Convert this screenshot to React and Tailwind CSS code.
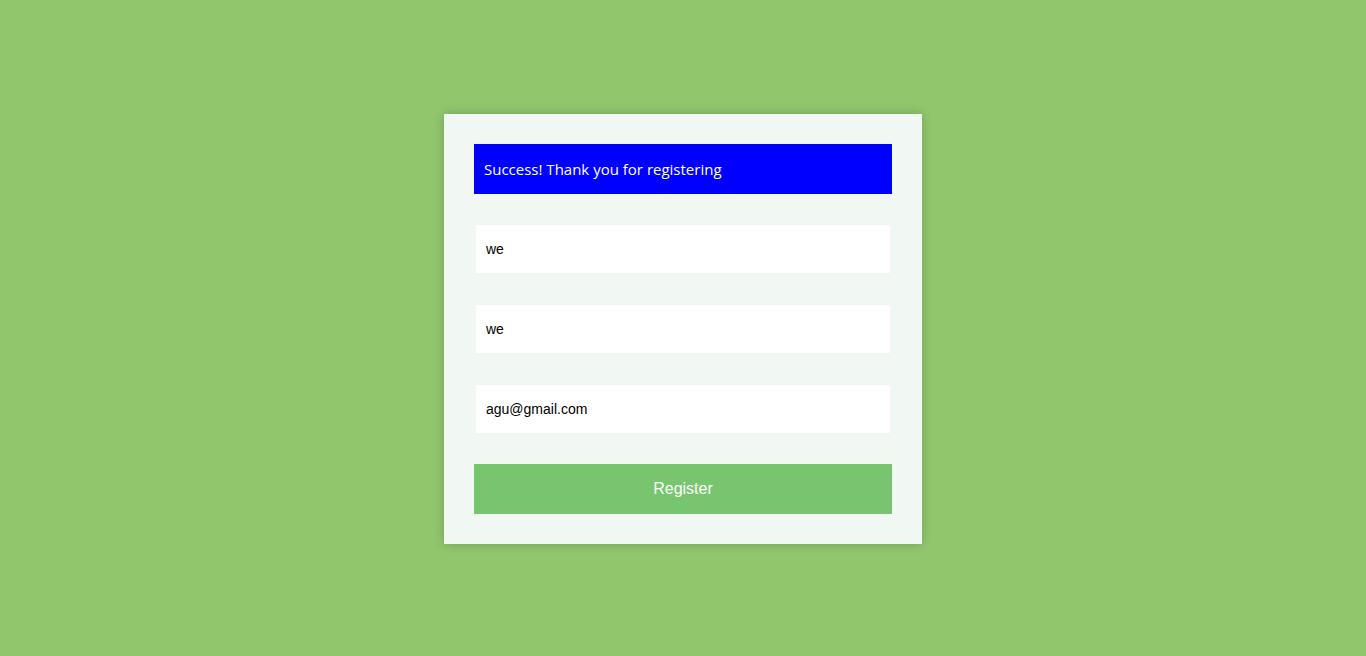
import React, { useState } from 'react';

const App = () => {
  const [firstName, setFirstName] = useState('we');
  const [lastName, setLastName] = useState('we');
  const [email, setEmail] = useState('agu@gmail.com');

  return (
    <div className="min-h-screen w-full bg-[#91c66d] flex items-center justify-center pt-[2px]">
      {/* Form card */}
      <div className="w-[478px] bg-[#f1f8f4] p-[30px] shadow-[0_0_10px_rgba(0,0,0,0.2)] flex flex-col gap-[30px]">
        {/* Success banner */}
        <div className="h-[50px] bg-[#0000ff] text-white flex items-center px-[10px] text-[15px] font-['Open_Sans',sans-serif]">
          Success! Thank you for registering
        </div>

        <input
          type="text"
          value={firstName}
          onChange={(e) => setFirstName(e.target.value)}
          className="h-[50px] mx-[1px] bg-white border border-[#f3f5f4] px-[10px] text-[14px] text-black font-['Liberation_Sans',Arial,sans-serif] outline-none"
        />
        <input
          type="text"
          value={lastName}
          onChange={(e) => setLastName(e.target.value)}
          className="h-[50px] mx-[1px] bg-white border border-[#f3f5f4] px-[10px] text-[14px] text-black font-['Liberation_Sans',Arial,sans-serif] outline-none"
        />
        <input
          type="email"
          value={email}
          onChange={(e) => setEmail(e.target.value)}
          className="h-[50px] mx-[1px] bg-white border border-[#f3f5f4] px-[10px] text-[14px] text-black font-['Liberation_Sans',Arial,sans-serif] outline-none"
        />

        {/* Register button */}
        <button className="h-[50px] bg-[#77c56e] text-white text-[16px] font-['Liberation_Sans',Arial,sans-serif]">
          Register
        </button>
      </div>
    </div>
  );
};

export default App;
